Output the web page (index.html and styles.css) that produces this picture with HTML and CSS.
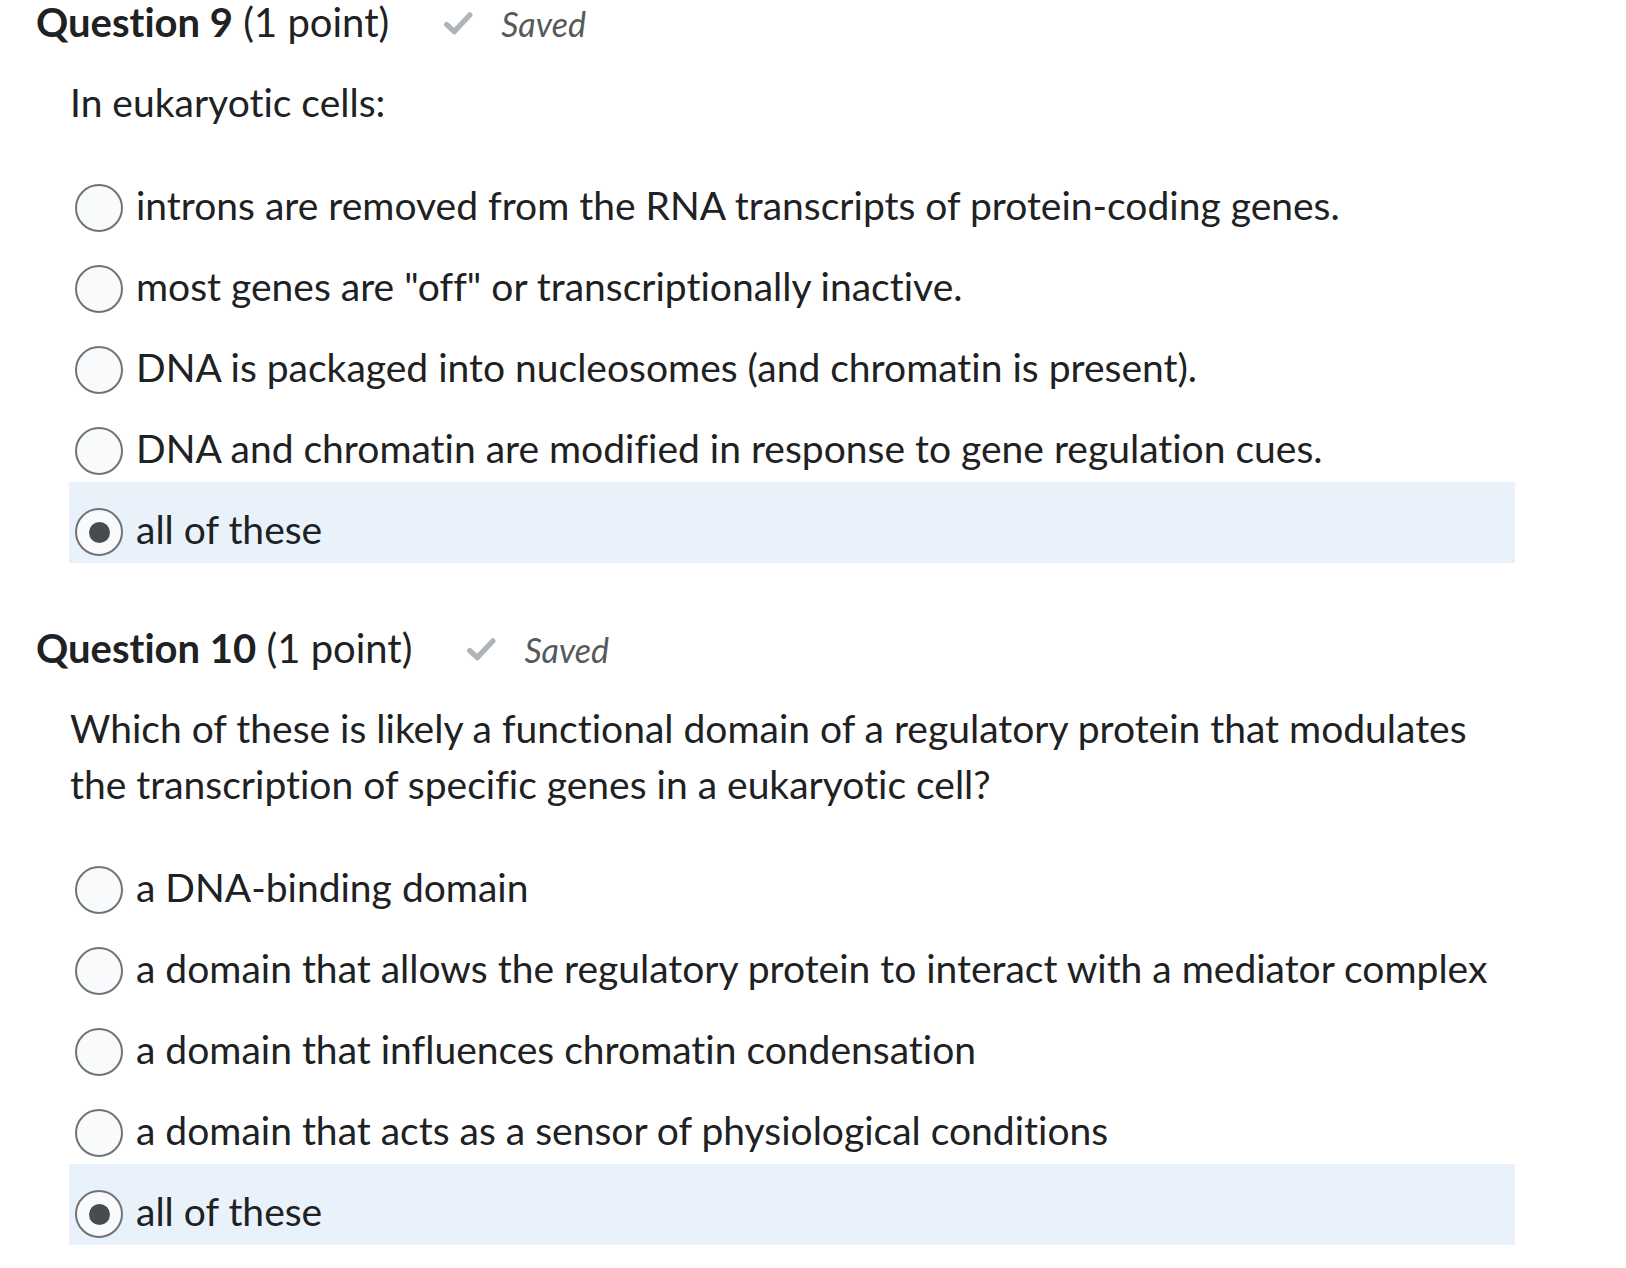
FILE: index.html
```html
<!DOCTYPE html>
<html lang="en">
<head>
<meta charset="utf-8">
<title>Quiz</title>
<link rel="stylesheet" href="styles.css">
</head>
<body>
<div class="page">
  <section class="question q9">
    <h2 class="q-head">
      <span class="q-title"><strong>Question 9</strong> (1 point)</span>
      <span class="saved">
        <svg class="check" viewBox="0 0 28 22" width="30" height="24" aria-hidden="true"><path d="M3.5 12.5 L10.5 19 L25 3.5" fill="none" stroke="#aeb4b7" stroke-width="5" stroke-linecap="round" stroke-linejoin="round"/></svg>
        <em>Saved</em>
      </span>
    </h2>
    <p class="q-text">In eukaryotic cells:</p>
    <div class="options">
      <label class="opt"><span class="radio"></span><span class="opt-text">introns are removed from the RNA transcripts of protein-coding genes.</span></label>
      <label class="opt"><span class="radio"></span><span class="opt-text">most genes are "off" or transcriptionally inactive.</span></label>
      <label class="opt"><span class="radio"></span><span class="opt-text">DNA is packaged into nucleosomes (and chromatin is present).</span></label>
      <label class="opt"><span class="radio"></span><span class="opt-text">DNA and chromatin are modified in response to gene regulation cues.</span></label>
      <label class="opt selected"><span class="radio checked"></span><span class="opt-text">all of these</span></label>
    </div>
  </section>

  <section class="question q10">
    <h2 class="q-head">
      <span class="q-title"><strong>Question 10</strong> (1 point)</span>
      <span class="saved">
        <svg class="check" viewBox="0 0 28 22" width="30" height="24" aria-hidden="true"><path d="M3.5 12.5 L10.5 19 L25 3.5" fill="none" stroke="#aeb4b7" stroke-width="5" stroke-linecap="round" stroke-linejoin="round"/></svg>
        <em>Saved</em>
      </span>
    </h2>
    <p class="q-text">Which of these is likely a functional domain of a regulatory protein that modulates the transcription of specific genes in a eukaryotic cell?</p>
    <div class="options">
      <label class="opt"><span class="radio"></span><span class="opt-text">a DNA-binding domain</span></label>
      <label class="opt"><span class="radio"></span><span class="opt-text">a domain that allows the regulatory protein to interact with a mediator complex</span></label>
      <label class="opt"><span class="radio"></span><span class="opt-text">a domain that influences chromatin condensation</span></label>
      <label class="opt"><span class="radio"></span><span class="opt-text">a domain that acts as a sensor of physiological conditions</span></label>
      <label class="opt selected"><span class="radio checked"></span><span class="opt-text">all of these</span></label>
    </div>
  </section>
</div>
</body>
</html>
```

FILE: styles.css
```css
html, body {
  margin: 0;
  padding: 0;
  background: #ffffff;
}

body {
  font-family: Lato, "Open Sans", "Liberation Sans", sans-serif;
  color: #202122;
  font-variant-ligatures: none;
}

.page {
  padding-left: 36px;
  width: 1479px;
}

.question {
  display: flex;
  flex-direction: column;
}

.q10 {
  margin-top: 63px;
}

.q-head {
  margin: 0;
  display: flex;
  align-items: baseline;
  font-size: 40px;
  line-height: 45px;
  font-weight: 400;
  color: #202122;
}

.q-head strong {
  font-weight: 700;
}

.saved {
  display: inline-flex;
  align-items: baseline;
  margin-left: 54px;
  font-size: 34px;
  color: #555a5c;
}

.saved .check {
  align-self: center;
  margin-right: 28px;
  position: relative;
  top: -1px;
}

.saved em {
  font-style: italic;
}

.q-text {
  margin: 28px 0 28px 34px;
  font-size: 39px;
  line-height: 56px;
  max-width: 1420px;
}

.options {
  margin-left: 33px;
  display: flex;
  flex-direction: column;
}

.opt {
  display: flex;
  align-items: flex-start;
  height: 81px;
  box-sizing: border-box;
  padding: 19px 0 6px 6px;
  font-size: 39px;
  line-height: 56px;
}

.opt.selected {
  background: #e9f1fb;
}

.radio {
  flex: none;
  width: 48px;
  height: 48px;
  margin-top: 7px;
  margin-right: 13px;
  box-sizing: border-box;
  border: 2px solid #6f7477;
  border-radius: 50%;
  background: #f9fafc;
  display: flex;
  align-items: center;
  justify-content: center;
}

.radio.checked::after {
  content: "";
  width: 21px;
  height: 21px;
  border-radius: 50%;
  background: #494c4e;
}

.opt-text {
  white-space: nowrap;
}
```
